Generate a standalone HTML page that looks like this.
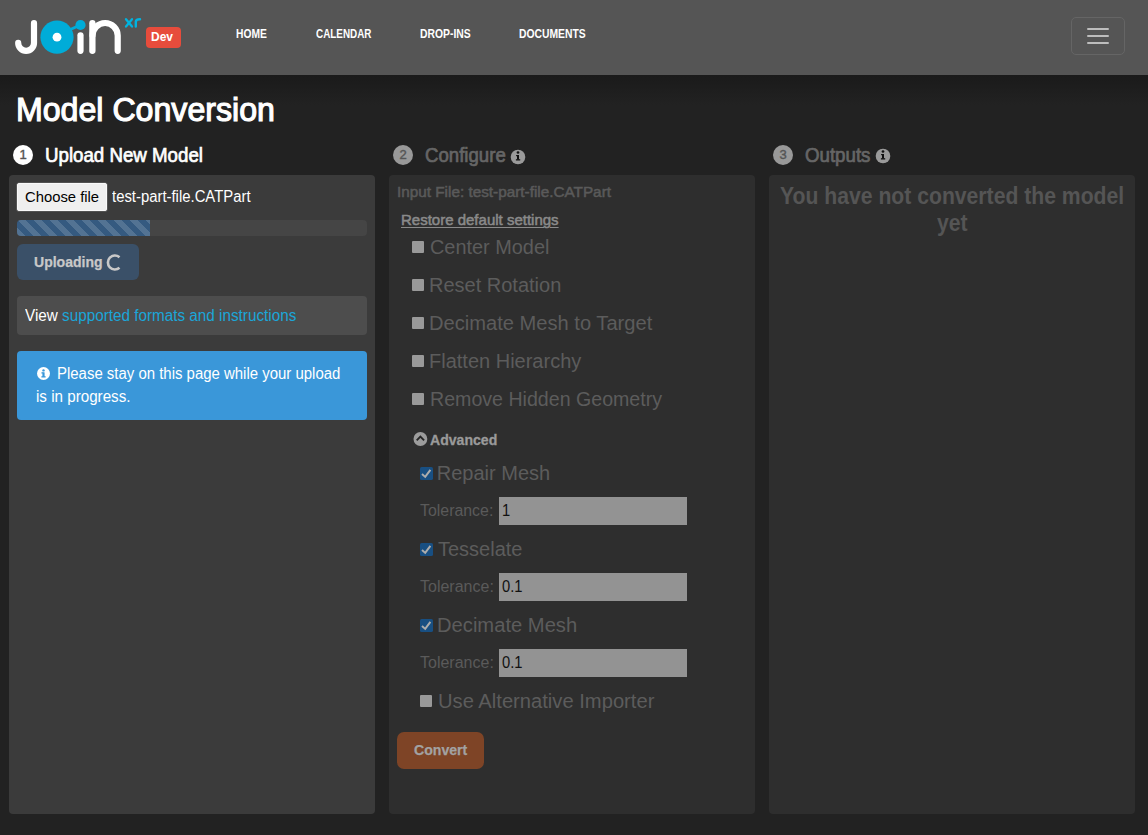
<!DOCTYPE html>
<html><head><meta charset="utf-8">
<style>
*{box-sizing:border-box;margin:0;padding:0}
html,body{width:1148px;height:835px;overflow:hidden}
body{background:#222;font-family:"Liberation Sans",sans-serif;color:#fff;position:relative}
.abs{position:absolute}
#hdr{left:0;top:0;width:1148px;height:75px;background:#555}
#grad{left:0;top:75px;width:1148px;height:30px;background:linear-gradient(#1a1a1a,#222)}
.nav{top:26.5px;font-size:12px;font-weight:bold;color:#fff;line-height:14px}
#burger{left:1071px;top:17px;width:54px;height:38px;border:1px solid #656565;border-radius:5px}
#burger i{position:absolute;left:15px;width:22px;height:2.2px;background:#bdbdbd;border-radius:1.1px}
#dev{left:146px;top:27px;width:35px;height:21px;background:#e74c3c;border-radius:4px;font-size:13px;font-weight:bold;line-height:20px;color:#fff;padding-left:5px}
h1{position:absolute;left:16px;top:91px;font-size:33px;font-weight:bold;line-height:38px;white-space:nowrap}
.step{position:absolute;top:145px;width:20px;height:20px;border-radius:50%;font-size:13px;line-height:20px;text-align:center;-webkit-text-stroke:0.4px currentColor}
.stitle{position:absolute;top:143px;font-size:20px;font-weight:bold;line-height:24px;white-space:nowrap}
.panel{position:absolute;top:175px;height:639px;width:366px;border-radius:4px}
#p1{left:9px;background:#3b3b3b}
#p2{left:389px;background:#2e2e2e}
#p3{left:769px;background:#2e2e2e}
.t{position:absolute;white-space:nowrap}

.sx{display:inline-block;transform-origin:0 0}
.med{font-weight:normal!important;-webkit-text-stroke:0.035em currentColor}
.btnfile{position:absolute;left:17.4px;top:183.3px;width:89.5px;height:28px;background:#efefef;border:1px solid #f9f9f9;box-shadow:0 0 0 0.6px #6a6a6a;border-radius:2px;color:#000;font-size:15px;line-height:26px;padding-left:7px;white-space:nowrap}
.prog{position:absolute;left:17px;top:220px;width:350px;height:16px;background:#454545;border-radius:4px;overflow:hidden}
.prog .bar{position:absolute;left:0;top:0;width:133px;height:16px;background-color:#355a80;background-image:linear-gradient(45deg,rgba(255,255,255,.15) 25%,transparent 25%,transparent 50%,rgba(255,255,255,.15) 50%,rgba(255,255,255,.15) 75%,transparent 75%,transparent);background-size:16px 16px}
.upl{position:absolute;left:17px;top:244px;width:122px;height:36px;background:#3a5068;border-radius:6px}
.viewbox{position:absolute;left:17px;top:296px;width:350px;height:39px;background:#4d4d4d;border-radius:4px}
.alert{position:absolute;left:17px;top:351px;width:350px;height:69px;background:#3a97d9;border-radius:4px}
.cb{position:absolute;width:12px;height:12px;background:#999;border-radius:1px}
.cbc{position:absolute;width:13px;height:13px;background:#1d5a8c;border-radius:2px}
.lbl{position:absolute;font-size:20px;color:#5c5c5c;white-space:nowrap;line-height:24px}
.tol{position:absolute;font-size:16px;color:#5a5a5a;white-space:nowrap;line-height:20px}
.inp{position:absolute;left:498.8px;width:188.6px;height:28.6px;background:#939393;color:#111;font-size:16px;line-height:28px;padding-left:3.6px}
.inp span{display:inline-block;transform:scaleX(0.92);transform-origin:0 0}
</style></head><body>
<div id="hdr" class="abs">
  <svg class="abs" style="left:0;top:0" width="190" height="75" viewBox="0 0 190 75">
    <path d="M34 23.2 V42.9 A7.9 7.9 0 0 1 18.2 42.9" fill="none" stroke="#fff" stroke-width="6.2" stroke-linecap="round"/>
    <circle cx="57" cy="37.2" r="16.6" fill="#00acd8"/>
    <circle cx="57" cy="37.2" r="4.4" fill="#fff"/>
    <path d="M68 30.5 L80.5 25" stroke="#00acd8" stroke-width="3"/>
    <circle cx="80.5" cy="25" r="5.1" fill="#00acd8"/>
    <path d="M80.5 35.3 V50.8" stroke="#fff" stroke-width="6.2" stroke-linecap="round"/>
    <path d="M92.4 50.8 V23.2" stroke="#fff" stroke-width="6.3" stroke-linecap="round"/>
    <path d="M92.5 35.6 A12.6 12.6 0 0 1 117.7 35.6 V50.8" fill="none" stroke="#fff" stroke-width="6.2" stroke-linecap="round"/>
    <path d="M126 19.2 L132 26.5 M132 19.2 L126 26.5" stroke="#00b4e0" stroke-width="2.3" stroke-linecap="round"/>
    <path d="M135.8 26.6 V21.5 Q136.2 19.2 140 19.2" fill="none" stroke="#00b4e0" stroke-width="2.4" stroke-linecap="round"/>
  </svg>
  <div id="dev" class="abs"><span class="sx" id="devt" style="transform:scaleX(0.92)">Dev</span></div>
  <div class="abs nav" style="left:236px"><span class="sx" id="home" style="transform:scaleX(0.8556)">HOME</span></div>
  <div class="abs nav" style="left:316px"><span class="sx" id="cal" style="transform:scaleX(0.8235)">CALENDAR</span></div>
  <div class="abs nav" style="left:420px"><span class="sx" id="drop" style="transform:scaleX(0.8644)">DROP-INS</span></div>
  <div class="abs nav" style="left:519px"><span class="sx" id="docs" style="transform:scaleX(0.861)">DOCUMENTS</span></div>
  <div id="burger" class="abs"><i style="top:9.5px"></i><i style="top:16.9px"></i><i style="top:24.3px"></i></div>
</div>
<div id="grad" class="abs"></div>
<h1><span class="sx med" id="h1" style="transform:scaleX(0.9734)">Model Conversion</span></h1>

<div class="step" style="left:13px;background:#fff;color:#555">1</div>
<div class="stitle" style="left:45px;color:#fff"><span class="sx med" id="upl" style="transform:scaleX(0.9346)">Upload New Model</span></div>
<div class="step" style="left:393px;background:#999;color:#555">2</div>
<div class="stitle" style="left:425px;color:#666"><span class="sx med" id="cfg" style="transform:scaleX(0.9318)">Configure</span></div>
<div class="step" style="left:773px;background:#999;color:#555">3</div>
<div class="stitle" style="left:805px;color:#666"><span class="sx med" id="out" style="transform:scaleX(0.9343)">Outputs</span></div>

<svg class="abs" style="left:509.7px;top:148.6px" width="16" height="16" viewBox="0 0 16 16"><circle cx="8" cy="8" r="7.3" fill="#9a9a9a"/><circle cx="8" cy="3.5" r="1.35" fill="#111"/><rect x="7" y="6" width="2" height="4.6" fill="#111"/><rect x="6.1" y="6" width="1.5" height="1.2" fill="#111"/><rect x="5.9" y="10.2" width="4.3" height="1.3" fill="#111"/></svg>
<svg class="abs" style="left:874.6px;top:148.1px" width="16" height="16" viewBox="0 0 16 16"><circle cx="8" cy="8" r="7.3" fill="#9a9a9a"/><circle cx="8" cy="3.5" r="1.35" fill="#111"/><rect x="7" y="6" width="2" height="4.6" fill="#111"/><rect x="6.1" y="6" width="1.5" height="1.2" fill="#111"/><rect x="5.9" y="10.2" width="4.3" height="1.3" fill="#111"/></svg>
<div id="p1" class="panel"></div>
<div id="p2" class="panel"></div>
<div id="p3" class="panel"></div>

<!-- left panel content -->
<div class="btnfile"><span class="sx" id="chf" style="transform:scaleX(0.9867)">Choose file</span></div>
<div class="t" style="left:112px;top:187px;font-size:16px;line-height:20px;color:#fff"><span class="sx" id="fname" style="transform:scaleX(0.9293)">test-part-file.CATPart</span></div>
<div class="prog"><div class="bar"></div></div>
<div class="upl">
  <div class="t" style="left:16.6px;top:8.5px;font-size:15px;font-weight:bold;color:#c8c8c8;line-height:18px;-webkit-text-stroke:0.25px #c8c8c8"><span class="sx" id="uplt" style="transform:scaleX(0.9356)">Uploading</span></div>
  <svg class="abs" style="left:88px;top:9px" width="18" height="19" viewBox="0 0 18 19"><path d="M14.5 4.2 A7 7 0 1 0 14.5 14.8" fill="none" stroke="#c8c8c8" stroke-width="2.6"/></svg>
</div>
<div class="viewbox"></div>
<div class="t" style="left:25px;top:306px;font-size:16px;line-height:20px"><span class="sx" id="view" style="transform:scaleX(0.9542)"><span style="color:#fff">View </span><span style="color:#1ba6d9">supported formats and instructions</span></span></div>
<div class="alert"></div>
<svg class="abs" style="left:37px;top:367px" width="13" height="13" viewBox="0 0 13 13"><circle cx="6.5" cy="6.5" r="6.5" fill="#fff"/><rect x="5.4" y="5.3" width="2.2" height="4.6" fill="#3a97d9"/><rect x="4.4" y="9.2" width="4.2" height="1.3" fill="#3a97d9"/><rect x="4.4" y="5.3" width="2" height="1.2" fill="#3a97d9"/><circle cx="6.5" cy="3.4" r="1.2" fill="#3a97d9"/></svg>
<div class="t" style="left:56.5px;top:364.3px;font-size:16px;line-height:20px;color:#fff"><span class="sx" id="al1" style="transform:scaleX(0.9341)">Please stay on this page while your upload</span></div>
<div class="t" style="left:36.2px;top:386.5px;font-size:16px;line-height:20px;color:#fff"><span class="sx" id="al2" style="transform:scaleX(0.949)">is in progress.</span></div>

<!-- center panel content -->
<div class="t" style="left:397px;top:183px;font-size:14px;line-height:18px;color:#5a5a5a;font-weight:bold"><span class="sx med" id="inpf" style="transform:scaleX(1.0928)">Input File: test-part-file.CATPart</span></div>
<div class="t" style="left:401px;top:211px;font-size:15px;line-height:18px;color:#8a8a8a;font-weight:bold"><span class="sx med" id="rst"><u style="text-decoration-thickness:1px;text-underline-offset:2px">Restore default settings</u></span></div>

<div class="cb" style="left:412px;top:241px"></div><div class="lbl" style="left:430px;top:235px"><span class="sx" id="r1" style="transform:scaleX(0.9941)">Center Model</span></div>
<div class="cb" style="left:412px;top:279px"></div><div class="lbl" style="left:429px;top:273px"><span class="sx" id="r2">Reset Rotation</span></div>
<div class="cb" style="left:412px;top:317px"></div><div class="lbl" style="left:429px;top:311px"><span class="sx" id="r3" style="transform:scaleX(1.0059)">Decimate Mesh to Target</span></div>
<div class="cb" style="left:412px;top:355px"></div><div class="lbl" style="left:429px;top:349px"><span class="sx" id="r4">Flatten Hierarchy</span></div>
<div class="cb" style="left:412px;top:393px"></div><div class="lbl" style="left:430px;top:387px"><span class="sx" id="r5" style="transform:scaleX(0.98)">Remove Hidden Geometry</span></div>

<svg class="abs" style="left:413px;top:432.4px" width="15" height="15" viewBox="0 0 15 15"><circle cx="7.4" cy="7" r="6.9" fill="#9c9c9c"/><path d="M3.7 8.4 L7.4 4.7 L11.1 8.4" fill="none" stroke="#262626" stroke-width="1.9"/></svg>
<div class="t" style="left:430px;top:430.5px;font-size:15px;line-height:18px;color:#9a9a9a;font-weight:bold;-webkit-text-stroke:0.3px #9a9a9a"><span class="sx" id="adv" style="transform:scaleX(0.938)">Advanced</span></div>

<svg class="abs" style="left:420px;top:467px" width="13" height="13" viewBox="0 0 13 13"><rect width="13" height="13" rx="1.6" fill="#184f82"/><path d="M2 7.1 L5.2 9.9 L10.4 2.9" fill="none" stroke="#adadad" stroke-width="2"/></svg>
<div class="lbl" style="left:436.8px;top:461px"><span class="sx" id="r6">Repair Mesh</span></div>
<div class="tol" style="left:420px;top:501px"><span class="sx" id="t1" style="transform:scaleX(0.9932)">Tolerance:</span></div>
<div class="inp" style="top:496.7px"><span>1</span></div>

<svg class="abs" style="left:420px;top:543px" width="13" height="13" viewBox="0 0 13 13"><rect width="13" height="13" rx="1.6" fill="#184f82"/><path d="M2 7.1 L5.2 9.9 L10.4 2.9" fill="none" stroke="#adadad" stroke-width="2"/></svg>
<div class="lbl" style="left:438px;top:537px"><span class="sx" id="r7">Tesselate</span></div>
<div class="tol" style="left:420px;top:577px"><span class="sx" id="t2">Tolerance:</span></div>
<div class="inp" style="top:572.7px"><span>0.1</span></div>

<svg class="abs" style="left:420px;top:619px" width="13" height="13" viewBox="0 0 13 13"><rect width="13" height="13" rx="1.6" fill="#184f82"/><path d="M2 7.1 L5.2 9.9 L10.4 2.9" fill="none" stroke="#adadad" stroke-width="2"/></svg>
<div class="lbl" style="left:436.6px;top:613px"><span class="sx" id="r8" style="transform:scaleX(1.0088)">Decimate Mesh</span></div>
<div class="tol" style="left:420px;top:653px"><span class="sx" id="t3">Tolerance:</span></div>
<div class="inp" style="top:648.7px"><span>0.1</span></div>

<div class="cb" style="left:420px;top:695px"></div>
<div class="lbl" style="left:438px;top:689px"><span class="sx" id="r9" style="transform:scaleX(1.0085)">Use Alternative Importer</span></div>

<div class="abs" style="left:397px;top:732px;width:87px;height:37px;background:#7e4426;border-radius:7px"></div>
<div class="t" style="left:414px;top:741px;font-size:15px;line-height:18px;color:#a2a2a2;font-weight:bold;-webkit-text-stroke:0.25px #a2a2a2"><span class="sx" id="conv" style="transform:scaleX(0.9404)">Convert</span></div>

<!-- right panel -->
<div class="t" style="left:780.2px;top:182px;font-size:24px;line-height:28px;color:#555;font-weight:bold"><span class="sx" id="you1" style="transform:scaleX(0.8819)">You have not converted the model</span></div>
<div class="t" style="left:937px;top:209px;font-size:24px;line-height:28px;color:#555;font-weight:bold"><span class="sx" id="you2" style="transform:scaleX(0.8824)">yet</span></div>
</body></html>
